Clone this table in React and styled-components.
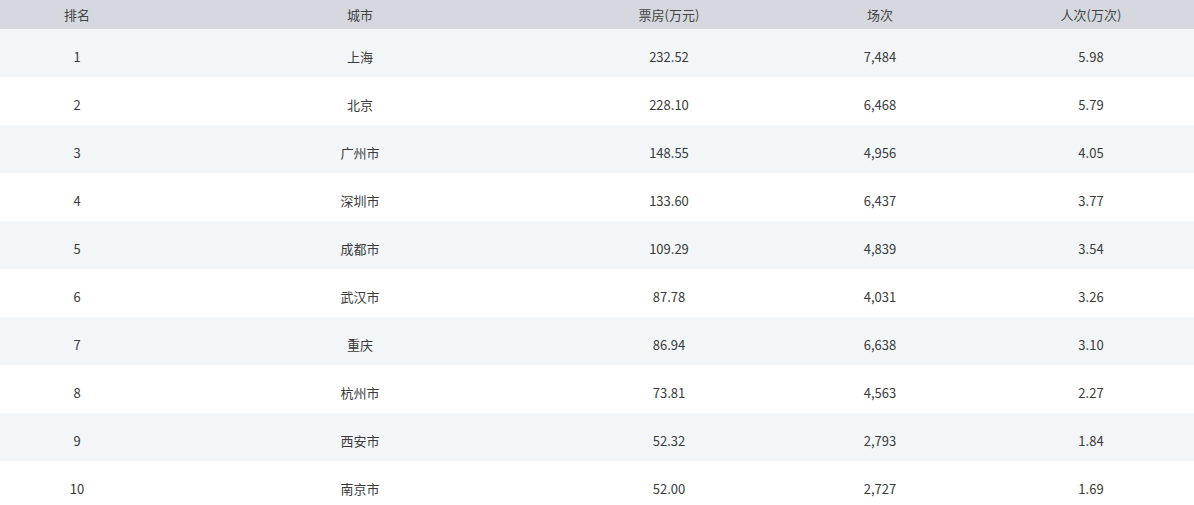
import React from "react";
import styled, { createGlobalStyle } from "styled-components";

const rows = [
  ["1", "上海", "232.52", "7,484", "5.98"],
  ["2", "北京", "228.10", "6,468", "5.79"],
  ["3", "广州市", "148.55", "4,956", "4.05"],
  ["4", "深圳市", "133.60", "6,437", "3.77"],
  ["5", "成都市", "109.29", "4,839", "3.54"],
  ["6", "武汉市", "87.78", "4,031", "3.26"],
  ["7", "重庆", "86.94", "6,638", "3.10"],
  ["8", "杭州市", "73.81", "4,563", "2.27"],
  ["9", "西安市", "52.32", "2,793", "1.84"],
  ["10", "南京市", "52.00", "2,727", "1.69"],
];

const headers = ["排名", "城市", "票房(万元)", "场次", "人次(万次)"];

const GlobalStyle = createGlobalStyle`
  html, body {
    margin: 0;
    padding: 0;
    background: #fff;
  }
  body {
    font-family: "Noto Sans CJK SC", "Liberation Sans", sans-serif;
    color: #333;
  }
`;

const Table = styled.div`
  width: 1194px;
`;

const Row = styled.div`
  display: grid;
  grid-template-columns: 154px 412px 206px 216px 206px;
  height: ${(p) => (p.$head ? "29px" : "48px")};
  padding-top: ${(p) => (p.$head ? "0" : "6px")};
  box-sizing: border-box;
  background: ${(p) => (p.$head ? "#d5d9df" : p.$alt ? "#f3f6f9" : "#fff")};
  color: ${(p) => (p.$head ? "#444" : "#3a3a3a")};
`;

const Cell = styled.div`
  display: flex;
  align-items: center;
  justify-content: center;
  font-size: 13px;
  line-height: 1;
`;

export default function App() {
  return (
    <>
      <GlobalStyle />
      <Table>
        <Row $head>
          {headers.map((h) => (
            <Cell key={h}>{h}</Cell>
          ))}
        </Row>
        {rows.map((r, i) => (
          <Row key={r[0]} $alt={i % 2 === 0}>
            {r.map((c, j) => (
              <Cell key={j}>{c}</Cell>
            ))}
          </Row>
        ))}
      </Table>
    </>
  );
}
